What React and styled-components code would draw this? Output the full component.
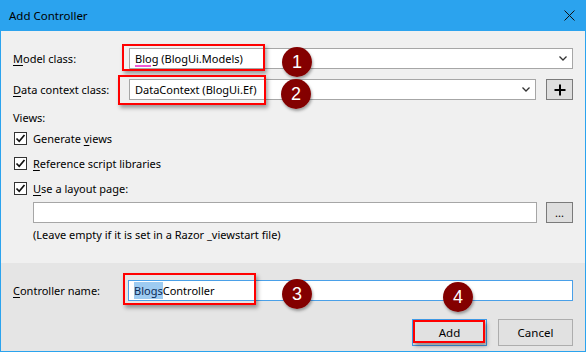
import React from 'react';
import styled, { createGlobalStyle } from 'styled-components';

const Global = createGlobalStyle`
  html, body { margin: 0; padding: 0; background: #ffffff; }
  body { font-family: "Noto Sans", "Segoe UI", sans-serif; font-size: 11px; color: #000; }
  * { box-sizing: border-box; }
`;

const Window = styled.div`
  position: relative;
  width: 586px;
  height: 352px;
  border: 1px solid #2ba3ee;
  border-top: none;
  display: flex;
  flex-direction: column;
  background: #f0f0f0;
  overflow: hidden;
`;

const TitleBar = styled.div`
  height: 31px;
  flex: none;
  background: #2ba3ee;
  display: flex;
  align-items: center;
  justify-content: space-between;
  padding: 0 10px 0 8px;
  font-size: 11.5px;
  color: #000;
`;

const CloseButton = styled.div`
  width: 12px;
  height: 12px;
  display: flex;
  align-items: center;
  justify-content: center;
`;

const Upper = styled.div`
  height: 232px;
  flex: none;
  padding: 17px 12px 0 12px;
  display: flex;
  flex-direction: column;
`;

const Lower = styled.div`
  flex: 1;
  background: #e5e5e5;
  padding: 17px 12px 0 12px;
  display: flex;
  flex-direction: column;
`;

const FieldRow = styled.div`
  display: grid;
  grid-template-columns: ${p => p.$label || 116}px 1fr;
  align-items: center;
  height: 21px;
  margin-top: ${p => p.$mt || 0}px;
`;

const Label = styled.span`
  line-height: 16px;
  white-space: nowrap;
`;

const Key = styled.span`
  text-decoration: underline;
  text-underline-offset: 2px;
`;

const FieldWithButton = styled.div`
  display: grid;
  grid-template-columns: 1fr 27px;
  column-gap: ${p => p.$gap || 10}px;
  align-items: center;
  height: 21px;
`;

const Combo = styled.div`
  height: 21px;
  background: #fff;
  border: 1px solid #a6a6a6;
  display: flex;
  align-items: center;
  justify-content: space-between;
  padding: 0 5px 0 5px;
  line-height: 16px;
  white-space: nowrap;
`;

const TextBox = styled.div`
  height: 21px;
  background: #fff;
  border: 1px solid ${p => (p.$focused ? '#4aa0e8' : '#a6a6a6')};
  display: flex;
  align-items: center;
  padding: 0 5px;
  line-height: 16px;
  white-space: nowrap;
`;

const Selected = styled.span`
  background: #9dcbf1;
  color: #0b2a56;
  padding: 1px 0;
`;

const Squiggle = styled.span`
  text-decoration: underline;
  text-decoration-color: #ef5ad6;
  text-decoration-thickness: 2px;
  text-underline-offset: 2px;
`;

const SmallButton = styled.div`
  height: 21px;
  width: 27px;
  background: #dedede;
  border: 1px solid #7a7a7a;
  display: flex;
  align-items: center;
  justify-content: center;
  font-size: 11px;
  line-height: 1;
`;

const ViewsLabel = styled.div`
  margin-top: 10px;
  line-height: 16px;
  height: 16px;
`;

const CheckRow = styled.label`
  height: 25px;
  display: flex;
  align-items: center;
  padding-left: 1px;
  gap: 6px;
`;

const CheckBox = styled.span`
  width: 13px;
  height: 13px;
  background: #fff;
  border: 1px solid #333;
  display: flex;
  align-items: center;
  justify-content: center;
  flex: none;
`;

const Indented = styled.div`
  padding-left: 20px;
  margin-top: ${p => p.$mt || 0}px;
  line-height: 16px;
`;

const ButtonRow = styled.div`
  margin-top: 18px;
  display: flex;
  justify-content: flex-end;
  gap: 11px;
`;

const DialogButton = styled.div`
  width: 75px;
  height: 27px;
  background: #e1e1e1;
  border: 1px solid ${p => (p.$default ? '#3f9be8' : '#adadad')};
  display: flex;
  align-items: center;
  justify-content: center;
  font-size: 11.5px;
`;

const RedBox = styled.div`
  position: absolute;
  border: 2px solid #ff0000;
  box-shadow: 2px 3px 4px rgba(0, 0, 0, 0.35);
  pointer-events: none;
`;

const Badge = styled.div`
  position: absolute;
  width: 30px;
  height: 30px;
  border-radius: 50%;
  background: radial-gradient(circle at 50% 45%, #870000 0%, #820000 70%, #760808 100%);
  box-shadow: 1px 2px 3px rgba(0, 0, 0, 0.35);
  color: #fff;
  font-family: "Liberation Sans", Arial, sans-serif;
  font-size: 18px;
  display: flex;
  align-items: center;
  justify-content: center;
`;

const Chevron = () => (
  <svg width="8" height="5" viewBox="0 0 8 5">
    <polyline points="0.5,0.5 4,4 7.5,0.5" fill="none" stroke="#333" strokeWidth="1.3" />
  </svg>
);

const Check = () => (
  <svg width="11" height="11" viewBox="0 0 11 11">
    <polyline points="1.5,5.5 4.2,8.3 9.5,2" fill="none" stroke="#111" strokeWidth="1.7" />
  </svg>
);

const Plus = () => (
  <svg width="12" height="12" viewBox="0 0 12 12">
    <path d="M6 0.5 V11.5 M0.5 6 H11.5" stroke="#000" strokeWidth="2" />
  </svg>
);

const boxes = [
  { l: 121, t: 44, w: 143, h: 27 },
  { l: 117, t: 75, w: 148, h: 30 },
  { l: 122, t: 273, w: 133, h: 32 },
  { l: 412, t: 320, w: 72, h: 23 },
];

const badges = [
  { n: '1', l: 281, t: 47 },
  { n: '2', l: 280, t: 79 },
  { n: '3', l: 281, t: 279 },
  { n: '4', l: 442, t: 282 },
];

export default function App() {
  return (
    <>
      <Global />
      <Window>
        <TitleBar>
          <span>Add Controller</span>
          <CloseButton>
            <svg width="11" height="11" viewBox="0 0 11 11">
              <path d="M0.5 0.5 L10.5 10.5 M10.5 0.5 L0.5 10.5" stroke="#111" strokeWidth="1" />
            </svg>
          </CloseButton>
        </TitleBar>

        <Upper>
          <FieldRow>
            <Label><Key>M</Key>odel class:</Label>
            <Combo>
              <span><Squiggle>Blog</Squiggle> (BlogUi.Models)</span>
              <Chevron />
            </Combo>
          </FieldRow>
          <FieldRow $mt={10}>
            <Label><Key>D</Key>ata context class:</Label>
            <FieldWithButton>
              <Combo>
                <span>DataContext (BlogUi.Ef)</span>
                <Chevron />
              </Combo>
              <SmallButton><Plus /></SmallButton>
            </FieldWithButton>
          </FieldRow>

          <ViewsLabel>Views:</ViewsLabel>
          <CheckRow>
            <CheckBox><Check /></CheckBox>
            <span>Generate <Key>v</Key>iews</span>
          </CheckRow>
          <CheckRow>
            <CheckBox><Check /></CheckBox>
            <span><Key>R</Key>eference script libraries</span>
          </CheckRow>
          <CheckRow>
            <CheckBox><Check /></CheckBox>
            <span><Key>U</Key>se a layout page:</span>
          </CheckRow>
          <Indented $mt={1}>
            <FieldWithButton $gap={9}>
              <TextBox />
              <SmallButton>...</SmallButton>
            </FieldWithButton>
          </Indented>
          <Indented $mt={4}>(Leave empty if it is set in a Razor _viewstart file)</Indented>
        </Upper>

        <Lower>
          <FieldRow $label={115}>
            <Label><Key>C</Key>ontroller name:</Label>
            <TextBox $focused>
              <span><Selected>Blogs</Selected>Controller</span>
            </TextBox>
          </FieldRow>
          <ButtonRow>
            <DialogButton $default>Add</DialogButton>
            <DialogButton>Cancel</DialogButton>
          </ButtonRow>
        </Lower>

        {boxes.map((b, i) => (
          <RedBox key={i} style={{ left: b.l, top: b.t, width: b.w, height: b.h }} />
        ))}
        {badges.map(b => (
          <Badge key={b.n} style={{ left: b.l, top: b.t }}>{b.n}</Badge>
        ))}
      </Window>
    </>
  );
}
